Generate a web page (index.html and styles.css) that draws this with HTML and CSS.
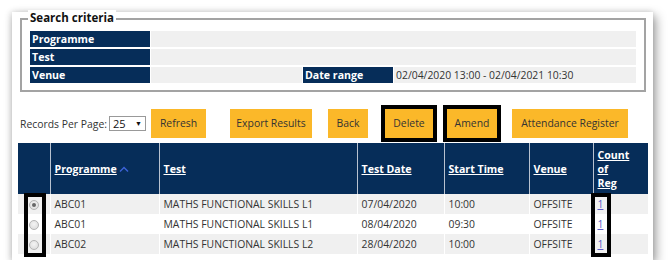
FILE: index.html
```html
<!DOCTYPE html>
<html>
<head>
<meta charset="utf-8">
<link rel="stylesheet" href="styles.css">
</head>
<body>
<div class="card">
  <div class="criteria">
    <div class="legend">Search criteria</div>
    <div class="crow"><div class="lbl">Programme</div><div class="val"></div></div>
    <div class="crow"><div class="lbl">Test</div><div class="val"></div></div>
    <div class="crow"><div class="lbl">Venue</div><div class="val short"></div><div class="lbl lbl2">Date range</div><div class="val">02/04/2020 13:00 - 02/04/2021 10:30</div></div>
  </div>
  <div class="toolbar">
    <span class="rpp">Records Per Page:</span>
    <div class="select"><span>25</span><span class="arr">▼</span></div>
    <div class="btn b-refresh">Refresh</div>
    <div class="btn b-export">Export Results</div>
    <div class="btn b-back">Back</div>
    <div class="btn b-delete hl">Delete</div>
    <div class="btn b-amend hl">Amend</div>
    <div class="btn b-att">Attendance Register</div>
  </div>
  <table class="grid">
    <thead>
      <tr>
        <th class="c1"></th>
        <th class="c2"><a>Programme</a><svg class="caret" width="10" height="6" viewBox="0 0 10 6"><polyline points="1,5.5 5,1.5 9,5.5" fill="none" stroke="#3d63d8" stroke-width="1.4"/></svg></th>
        <th class="c3"><a>Test</a></th>
        <th class="c4"><a>Test Date</a></th>
        <th class="c5"><a>Start Time</a></th>
        <th class="c6"><a>Venue</a></th>
        <th class="c7"><a>Count<br>of<br>Reg</a></th>
      </tr>
    </thead>
    <tbody>
      <tr class="alt"><td><span class="radio on"></span></td><td>ABC01</td><td>MATHS FUNCTIONAL SKILLS L1</td><td>07/04/2020</td><td>10:00</td><td>OFFSITE</td><td><a class="lnk">1</a></td></tr>
      <tr><td><span class="radio"></span></td><td>ABC01</td><td>MATHS FUNCTIONAL SKILLS L1</td><td>08/04/2020</td><td>09:30</td><td>OFFSITE</td><td><a class="lnk">1</a></td></tr>
      <tr class="alt"><td><span class="radio"></span></td><td>ABC02</td><td>MATHS FUNCTIONAL SKILLS L2</td><td>28/04/2020</td><td>10:00</td><td>OFFSITE</td><td><a class="lnk">1</a></td></tr>
    </tbody>
  </table>
  <div class="box box-radio"></div>
  <div class="box box-count"></div>
</div>
</body>
</html>
```

FILE: styles.css
```css
* { box-sizing: border-box; }
html, body { margin: 0; padding: 0; background: #fff; }
body {
  font-family: "Open Sans", "Liberation Sans", sans-serif;
  font-size: 10.4px;
  color: #333;
  padding: 12px 0 0 12px;
}
.card {
  position: relative;
  width: 641px;
  height: 248px;
  background: #fff;
  box-shadow: 3px 4px 10px rgba(0,0,0,0.38), -1px 0 6px rgba(0,0,0,0.14);
  padding-top: 6px;
}
.criteria {
  position: relative;
  margin-left: 8px;
  width: 626px;
  border: 2px solid #a3a3a3;
  padding: 11px 8px 5px 8px;
}
.legend {
  position: absolute;
  top: -10px;
  left: 6px;
  background: #fff;
  padding: 0 2px;
  font-weight: 700;
  font-size: 11.5px;
  line-height: 16px;
  color: #111;
}
.crow {
  display: flex;
  height: 16px;
  margin-bottom: 2px;
}
.lbl {
  width: 120px;
  background: #062d59;
  color: #fff;
  font-weight: 700;
  font-size: 10.6px;
  line-height: 16px;
  padding-left: 2px;
  margin-right: 1px;
}
.lbl2 { width: 90px; margin-left: 1px; }
.val {
  flex: 1;
  background: #f0f0f0;
  line-height: 16px;
  padding-left: 2px;
  font-size: 10.4px;
  color: #333;
}
.val.short { flex: 0 0 151px; }
.toolbar {
  display: flex;
  align-items: center;
  margin: 17px 0 0 8px;
  height: 29px;
}
.rpp { margin-right: 2px; }
.select {
  width: 37px;
  height: 15px;
  border: 1px solid #999;
  display: flex;
  justify-content: space-between;
  align-items: center;
  padding: 0 3px 0 3px;
  font-size: 11px;
  color: #111;
  background: #fff;
  margin-right: 5px;
}
.select .arr { font-size: 7px; color: #111; }
.btn {
  height: 29px;
  background: #fbb829;
  line-height: 29px;
  text-align: center;
  color: #333;
  font-size: 10.4px;
}
.b-refresh { width: 55px; }
.b-export { width: 82px; margin-left: 24px; }
.b-back { width: 40px; margin-left: 16px; }
.b-delete { width: 48px; margin-left: 17px; }
.b-amend { width: 50px; margin-left: 14px; }
.b-att { width: 116px; margin-left: 15px; }
.hl { outline: 4px solid #000; }
.grid {
  margin: 5px 0 0 6px;
  width: 630px;
  border-collapse: collapse;
  table-layout: fixed;
}
.grid th {
  background: #062d59;
  color: #fff;
  font-weight: 700;
  text-align: left;
  height: 51px;
  padding: 0 0 0 4px;
  border-left: 1px solid #b8c2d0;
  vertical-align: middle;
  font-size: 10.6px;
  line-height: 14px;
}
.grid th:first-child { border-left: none; }
.grid th a { text-decoration: underline; color: #fff; }
.grid .c1 { width: 32px; }
.grid .c2 { width: 109px; }
.grid .c3 { width: 198px; }
.grid .c4 { width: 87px; }
.grid .c5 { width: 85px; }
.grid .c6 { width: 64px; }
.grid .c7 { width: 55px; }
.caret { margin-left: 2px; vertical-align: 1px; }
.grid td {
  height: 20px;
  padding: 0 0 0 4px;
  border-left: 1px solid #fff;
  font-size: 10.4px;
  color: #333;
  vertical-align: middle;
}
.grid td:first-child { border-left: none; text-align: center; padding: 0; }
.grid tr.alt td { background: #f0f0f0; }
.radio {
  display: inline-block;
  width: 10px;
  height: 10px;
  border-radius: 50%;
  border: 1px solid #b5b5b5;
  background: radial-gradient(circle at 50% 40%, #f4f4f4, #d8d8d8);
  vertical-align: middle;
  position: relative;
}
.radio.on::after {
  content: "";
  position: absolute;
  left: 2px; top: 2px;
  width: 4px; height: 4px;
  border-radius: 50%;
  background: #666;
}
.lnk { color: #5b5bc8; text-decoration: underline; }
.box {
  position: absolute;
  border: 4px solid #000;
}
.box-radio { left: 12px; top: 181px; width: 22px; height: 64px; }
.box-count { left: 579px; top: 181px; width: 20px; height: 64px; }
```
